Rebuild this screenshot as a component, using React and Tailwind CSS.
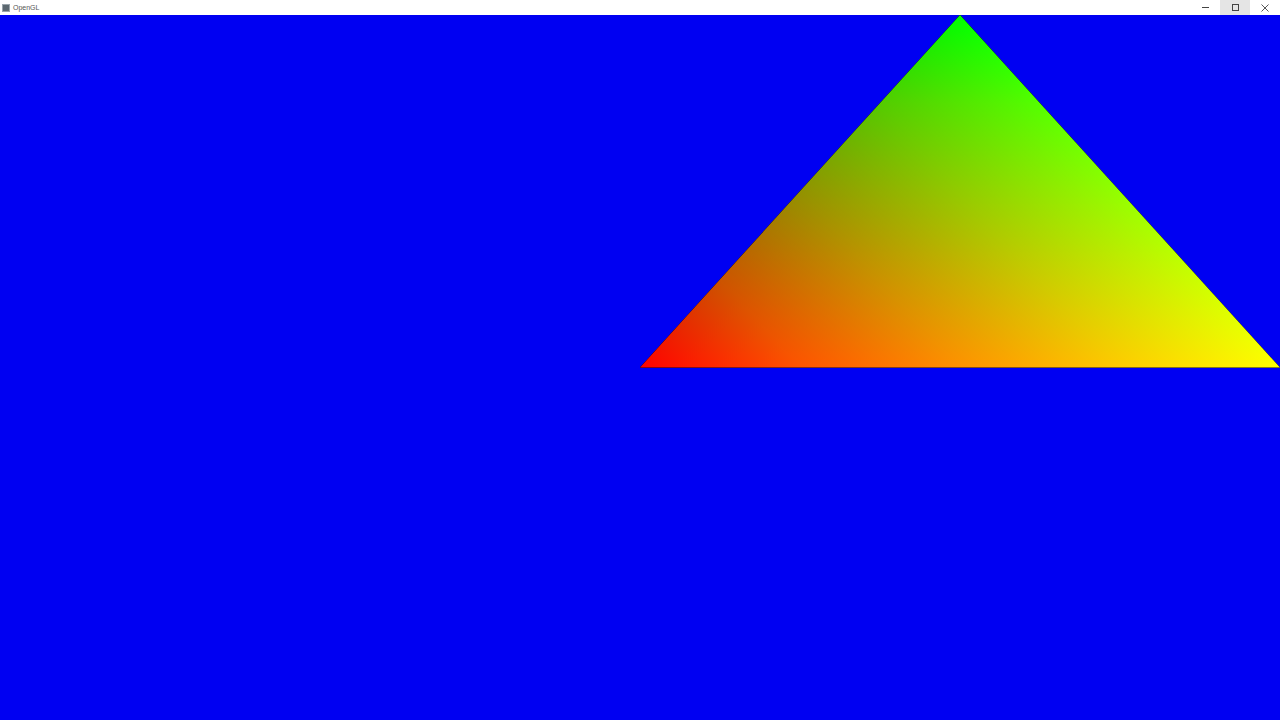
export default function App() {
  return (
    <div className="w-[1280px] h-[720px] flex flex-col overflow-hidden bg-[#0000f2]">
      {/* title bar */}
      <div className="h-[15px] bg-white flex items-center justify-between shrink-0" style={{ fontFamily: '"Segoe UI", "Liberation Sans", sans-serif' }}>
        <div className="flex items-center gap-[3px] pl-[2px]">
          <div className="w-[8px] h-[8px] bg-[#5c6870] border border-[#9aa4ab]" />
          <span className="text-[7px] leading-none text-[#555]">OpenGL</span>
        </div>
        <div className="flex items-center h-full text-[#333]">
          <div className="w-[30px] h-full flex items-center justify-center">
            <div className="w-[7px] h-px bg-[#444]" />
          </div>
          <div className="w-[30px] h-full flex items-center justify-center bg-[#e5e5e5]">
            <div className="w-[7px] h-[7px] border border-[#444]" />
          </div>
          <div className="w-[30px] h-full flex items-center justify-center">
            <svg width="8" height="8" viewBox="0 0 8 8">
              <path d="M0.5 0.5 L7.5 7.5 M7.5 0.5 L0.5 7.5" stroke="#444" strokeWidth="0.9" />
            </svg>
          </div>
        </div>
      </div>

      {/* GL viewport */}
      <div className="flex-1 bg-[#0000f2]">
        <svg width="1280" height="705" viewBox="0 0 1280 705" className="block">
          <defs>
            <linearGradient id="redCh" gradientUnits="userSpaceOnUse" x1="0" y1="0" x2="0" y2="352.5">
              <stop offset="0" stopColor="#000000" />
              <stop offset="0.25" stopColor="#540000" />
              <stop offset="0.5" stopColor="#920000" />
              <stop offset="0.75" stopColor="#cb0000" />
              <stop offset="1" stopColor="#ff0000" />
            </linearGradient>
            <linearGradient id="greenCh" gradientUnits="userSpaceOnUse" x1="640" y1="352.5" x2="990.86" y2="33.99">
              <stop offset="0" stopColor="#000000" />
              <stop offset="0.25" stopColor="#005400" />
              <stop offset="0.5" stopColor="#009200" />
              <stop offset="0.75" stopColor="#00cb00" />
              <stop offset="1" stopColor="#00ff00" />
            </linearGradient>
          </defs>
          <g style={{ isolation: 'isolate' }}>
            <polygon points="960,0 640,352.5 1280,352.5" fill="#000" />
            <polygon points="960,0 640,352.5 1280,352.5" fill="url(#redCh)" style={{ mixBlendMode: 'screen' }} />
            <polygon points="960,0 640,352.5 1280,352.5" fill="url(#greenCh)" style={{ mixBlendMode: 'screen' }} />
          </g>
        </svg>
      </div>
    </div>
  );
}
